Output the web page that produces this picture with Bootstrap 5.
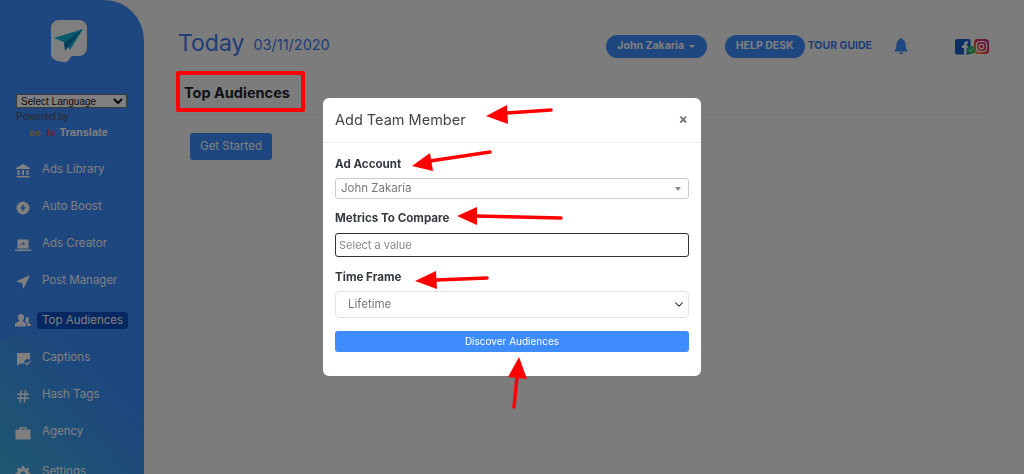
<!DOCTYPE html>
<html lang="en">
<head>
  <meta charset="UTF-8">
  <meta name="viewport" content="width=device-width, initial-scale=1">
  <title>Top Audiences</title>
  <link href="https://cdn.jsdelivr.net/npm/bootstrap@5.3.3/dist/css/bootstrap.min.css" rel="stylesheet">
  <style>
    html, body { height: 474px; overflow: hidden; }
    body {
      background: #f8f9fb;
      font-family: Inter, "Open Sans", sans-serif;
      color: #212529;
    }
    .side-bar {
      width: 144px;
      height: 474px;
      flex-shrink: 0;
      background: #3c8cff;
      border-top-right-radius: 40px;
      position: relative;
      overflow: hidden;
    }
    .side-wave { position: absolute; left: 0; bottom: 0; }
    .side-inner { position: relative; }
    .side-logo { padding: 20px 0 0 51px; height: 94px; }
    .lang-box { padding-left: 16px; height: 58px; }
    .lang-box select {
      width: 111px; height: 14px; display: block; padding: 0;
      font: 10px "Liberation Sans", sans-serif;
      background: #fff; border: 1px solid #777; color: #111; border-radius: 0;
    }
    .lang-powered { font: 10px/12px "Liberation Sans", sans-serif; color: #555; margin-top: 3px; }
    .lang-brand { font: 700 11px/14px "Liberation Sans", sans-serif; color: #fff; padding-left: 6px; margin-top: 2px; white-space: nowrap; }
    .lang-brand .goog { font-size: 9px; letter-spacing: .4px; margin-right: 1px; }
    .goog-a { color: #3c8cff; }
    .goog-b { color: #e6a23c; }
    .goog-c { color: #e0445a; }
    .side-item {
      height: 37px; display: flex; align-items: center;
      padding-left: 15px; color: #fff; font-size: 11.5px; white-space: nowrap;
    }
    .side-item svg { width: 16px; height: 16px; flex-shrink: 0; fill: #fff; }
    .side-item span { margin-top: -2px; padding: 2px 5px; margin-left: 6px; }
    .side-item.now { height: 40px; }
    .side-item.now span { background: #0a4fc4; border-radius: 4px; padding: 0 5px; line-height: 17px; margin-top: 0; }
    .side-item.last-item { margin-top: 3px; }
    .page-main { flex: 1; padding: 29px 41px 0 34px; min-width: 0; position: relative; }
    .head-row { height: 34px; margin-right: -7px; }
    .today-word { font-size: 23px; color: #3f78ee; line-height: 30px; margin-top: -6px; }
    .today-date { font-size: 14.5px; color: #3f78ee; margin-left: 9px; margin-top: -2px; }
    .pill-btn {
      background: #3c8cff; color: #fff; font-weight: 700; font-size: 10.5px;
      border-radius: 12px; height: 23px; display: inline-flex; align-items: center; justify-content: center;
    }
    .user-pill { width: 101px; margin-left: auto; }
    .user-pill::after { margin-left: 5px; }
    .help-pill { width: 80px; margin-left: 18px; }
    .tour-link { color: #3f78ee; font-weight: 700; font-size: 10.5px; margin-left: 3px; white-space: nowrap; }
    .bell-icon { margin-left: 22px; }
    .social-icons { margin-left: 47px; }
    .page-title { font-size: 14.5px; font-weight: 700; padding: 19px 0 0 8px; height: 52px; margin-left: -2px; border-bottom: 1px solid #e9ebef; }
    .start-btn {
      margin: 18px 0 0 12px; width: 82px; height: 27px; background: #3c8cff; color: #fff;
      font-size: 11.5px; border: 0; border-radius: 3px; padding: 0;
    }
    .box-mark { position: absolute; left: 32px; top: 71px; width: 129px; height: 41px; border: 4px solid #f00; border-radius: 2px; z-index: 1060; }
    .modal-dialog.team-dialog { max-width: 378px; margin: 98px auto 0; }
    .team-dialog .modal-content { height: 278px; border: 0; border-radius: 6px; }
    .team-dialog .modal-header { height: 45px; padding: 0 12px; border-bottom: 1px solid #eef0f3; }
    .team-dialog .modal-title { font-size: 14.5px; font-weight: 400; color: #444; }
    .x-btn { font-size: 14px; font-weight: 700; color: #777; line-height: 1; margin-top: -2px; padding-right: 1px; }
    .team-dialog .modal-body { padding: 14px 12px 12px; }
    .team-label { font-size: 11.6px; font-weight: 700; color: #343a40; line-height: 15px; margin: 0; display: block; }
    .metrics-label { margin-top: 12px; }
    .time-label { margin-top: 13px; }
    .fake-select {
      height: 21px; margin-top: 6px; border: 1px solid #c9ccd0; border-radius: 3px;
      font-size: 11.5px; color: #777; padding-left: 5px; display: flex; align-items: center; justify-content: space-between;
    }
    .fake-select i { border-top: 4px solid #888; border-left: 3px solid transparent; border-right: 3px solid transparent; margin-right: 7px; }
    .value-input {
      display: block; width: 100%; height: 24px; margin-top: 7px; border: 1px solid #333; border-radius: 3px;
      font-size: 11px; padding: 0 3px; color: #777;
    }
    .value-input::placeholder { color: #888; }
    .team-dialog .form-select.frame-select {
      height: 27px; margin-top: 6px; font-size: 11.5px; color: #777; padding: 0 0 0 12px;
      border-color: #dee2e6; border-radius: 4px; background-size: 12px 9px; background-position: right 3px center;
    }
    .discover-btn {
      display: block; width: 100%; height: 21px; margin-top: 13px; background: #3f8cff; color: #fff;
      border: 0; border-radius: 3px; font-size: 10px; padding: 0;
    }
    .arrow-layer { position: fixed; left: 0; top: 0; z-index: 1060; pointer-events: none; }
  </style>
</head>
<body>
  <div class="d-flex">
    <aside class="side-bar">
      <svg class="side-wave" width="144" height="140" viewBox="0 0 144 140">
        <defs>
          <linearGradient id="waveFill" x1="0" y1="1" x2="1" y2="0">
            <stop offset="0" stop-color="#40aee0"/>
            <stop offset=".75" stop-color="#3c8cff"/>
          </linearGradient>
        </defs>
        <path d="M0 8C15 0 28-4 48-8H144V140H0Z" fill="url(#waveFill)"/>
      </svg>
      <div class="side-inner">
        <div class="side-logo">
          <svg width="36" height="43" viewBox="0 0 36 43">
            <path d="M8 0H28A8 8 0 0 1 36 8V28A8 8 0 0 1 28 36H21C18 38 18 43 12 42A12 8 0 0 1 0 33V8A8 8 0 0 1 8 0Z" fill="#fff"/>
            <path d="M3 18L32 9 19 30 15 23Z" fill="#0fb6e0"/>
            <path d="M32 9L14 31 13 23Z" fill="#0a7fb5"/>
          </svg>
        </div>
        <div class="lang-box">
          <select><option>Select Language</option></select>
          <div class="lang-powered">Powered by</div>
          <div class="lang-brand"><span class="goog"><span class="goog-a">G</span><span class="goog-b">oo</span><span class="goog-a">g</span><span class="goog-c">le</span></span> Translate</div>
        </div>
        <div class="side-item"><svg viewBox="0 0 16 16"><path d="M8 1L15 5V6H1V5ZM2.500 7H4.500V12H2.500ZM7 7H9V12H7ZM11.500 7H13.500V12H11.500ZM1.500 13H14.500V14.500H1.500Z"/></svg><span>Ads Library</span></div>
        <div class="side-item"><svg viewBox="0 0 16 16"><path fill-rule="evenodd" d="M8 1.500A6.500 6.500 0 1 1 8 14.500 6.500 6.500 0 0 1 8 1.500ZM9 3.800L5 8.800H7.500L7 12.200 11 7.200H8.500Z"/></svg><span>Auto Boost</span></div>
        <div class="side-item"><svg viewBox="0 0 16 16"><path fill-rule="evenodd" d="M2.500 2.500H13.500V11.500H2.500ZM5 9L8 6.500V8H10L9 5.500 7 5.500 8 6 5 8ZM0 12.500H16V14H0Z"/></svg><span>Ads Creator</span></div>
        <div class="side-item"><svg viewBox="0 0 16 16"><path d="M15 1L8.500 15 7 9 1 7.500Z"/></svg><span>Post Manager</span></div>
        <div class="side-item now"><svg viewBox="0 0 16 16"><path d="M6 2A3 3 0 0 1 9 5C9 7 8 8.500 7.500 9 9 10 11 10.500 11 12V14.500H0V12.500C0 10.500 3 10 4.500 9 4 8.500 3 7 3 5A3 3 0 0 1 6 2ZM11.500 5A2.500 2.500 0 0 1 14 7.500C14 9 13 10 13 10.500 14 11 16 11.500 16 13V14H12V12C12 11 11 10 10 9.300 10.500 8.500 11 7 10.500 5.200Z"/></svg><span>Top Audiences</span></div>
        <div class="side-item"><svg viewBox="0 0 16 16"><path d="M2 2H15V8.500A4 4 0 0 0 9 12.500H5L2 15ZM9.500 12L10.500 11 12 12.500 15 9.500 16 10.500 12 14.500Z"/></svg><span>Captions</span></div>
        <div class="side-item"><svg viewBox="0 0 16 16"><path d="M5.500 2H7L6.700 5.500H9.500L9.800 2H11.300L11 5.500H14V7H10.900L10.700 9.500H14V11H10.500L10.200 14.500H8.700L9 11H6.200L5.900 14.500H4.400L4.700 11H2V9.500H4.800L5 7H2V5.500H5.200ZM6.500 7L6.300 9.500H9.200L9.400 7Z"/></svg><span>Hash Tags</span></div>
        <div class="side-item"><svg viewBox="0 0 16 16"><path fill-rule="evenodd" d="M5.500 2H10.500A1 1 0 0 1 11.500 3V4.500H14.500A1 1 0 0 1 15.500 5.500V13.500A1 1 0 0 1 14.500 14.500H1.500A1 1 0 0 1 .5 13.500V5.500A1 1 0 0 1 1.500 4.500H4.500V3A1 1 0 0 1 5.500 2ZM6 3.500V4.500H10V3.500Z"/></svg><span>Agency</span></div>
        <div class="side-item last-item"><svg viewBox="0 0 16 16"><path fill-rule="evenodd" d="M7 1H9L9.400 3 11 3.700 12.800 2.600 14.200 4 13 5.800 13.700 7.500 15.500 8V10L13.700 10.400 13 12 14.200 13.800 12.800 15.200 11 14 9.400 14.700 9 16.500H7L6.600 14.700 5 14 3.200 15.200 1.800 13.800 3 12 2.300 10.400.5 10V8L2.300 7.500 3 5.800 1.800 4 3.200 2.600 5 3.700 6.600 3ZM8 6.300A2.600 2.600 0 1 0 8 11.500 2.600 2.600 0 0 0 8 6.300Z"/></svg><span>Settings</span></div>
      </div>
    </aside>

    <main class="page-main">
      <div class="head-row d-flex align-items-center">
        <span class="today-word">Today</span><span class="today-date">03/11/2020</span>
        <div class="pill-btn dropdown-toggle user-pill">John Zakaria</div>
        <div class="pill-btn help-pill">HELP DESK</div>
        <span class="tour-link">TOUR GUIDE</span>
        <svg class="bell-icon" width="14" height="16" viewBox="0 0 14 16"><path d="M7 0A1.200 1.200 0 0 1 8.200 1.300C10.500 2 11.500 4 11.500 6.500 11.500 10 12.500 11.500 13.500 12.500V13.500H.5V12.500C1.500 11.500 2.500 10 2.500 6.500 2.500 4 3.500 2 5.800 1.300A1.200 1.200 0 0 1 7 0ZM5 14.500H9A2 2 0 0 1 5 14.500Z" fill="#3c8cff"/></svg>
        <svg class="social-icons" width="35" height="17" viewBox="0 0 35 17">
          <defs><linearGradient id="igFill" x1="0" y1="1" x2="1" y2="0"><stop offset="0" stop-color="#fbb040"/><stop offset=".5" stop-color="#e8304f"/><stop offset="1" stop-color="#b0309f"/></linearGradient></defs>
          <rect x="0" y="1" width="15.500" height="15.500" rx="2" fill="#1a5fc8"/>
          <path d="M9 16.500V10H7V7.500H9V6C9 3.800 10.500 3 13 3.200V5.500C11.800 5.500 11.500 5.700 11.500 6.500V7.500H13L12.700 10H11.500V16.500Z" fill="#fff"/>
          <rect x="19" y="1" width="15" height="15" rx="3.500" fill="url(#igFill)"/>
          <rect x="21.500" y="3.500" width="10" height="10" rx="3" fill="none" stroke="#fff" stroke-width="1.200"/>
          <circle cx="26.500" cy="8.500" r="2.300" fill="none" stroke="#fff" stroke-width="1.200"/>
          <circle cx="16" cy="12" r="4" fill="#2dbb6e"/>
          <path d="M14.200 12L15.500 13.300 17.800 10.800" fill="none" stroke="#fff" stroke-width="1"/>
        </svg>
      </div>
      <div class="page-title">Top Audiences</div>
      <button class="start-btn" type="button">Get Started</button>
      <div class="box-mark"></div>
    </main>
  </div>

  <div class="modal-backdrop show"></div>

  <div class="modal d-block">
    <div class="modal-dialog team-dialog">
      <div class="modal-content">
        <div class="modal-header">
          <h5 class="modal-title">Add Team Member</h5>
          <span class="x-btn ms-auto">&times;</span>
        </div>
        <div class="modal-body">
          <label class="team-label">Ad Account</label>
          <div class="fake-select"><span>John Zakaria</span><i></i></div>
          <label class="team-label metrics-label">Metrics To Compare</label>
          <input class="value-input" type="text" placeholder="Select a value">
          <label class="team-label time-label">Time Frame</label>
          <select class="form-select frame-select"><option>Lifetime</option></select>
          <button class="discover-btn" type="button">Discover Audiences</button>
        </div>
      </div>
    </div>
  </div>

  <svg class="arrow-layer" width="1024" height="474" viewBox="0 0 1024 474">
    <g fill="#f00" stroke="#f00" stroke-width="3.500" stroke-linecap="round">
      <line x1="507" y1="113" x2="551" y2="110"/>
      <line x1="430" y1="161" x2="490" y2="152"/>
      <line x1="476" y1="216" x2="561" y2="218"/>
      <line x1="436" y1="280" x2="487" y2="278"/>
      <line x1="517" y1="377" x2="514" y2="407"/>
    </g>
    <g fill="#f00">
      <polygon points="486,116 507,105 508,124"/>
      <polygon points="412,166 430,153 433,171"/>
      <polygon points="457,216 477,207 477,225"/>
      <polygon points="415,281 436,271 437,289"/>
      <polygon points="519,357 508,377 527,379"/>
    </g>
  </svg>
</body>
</html>
